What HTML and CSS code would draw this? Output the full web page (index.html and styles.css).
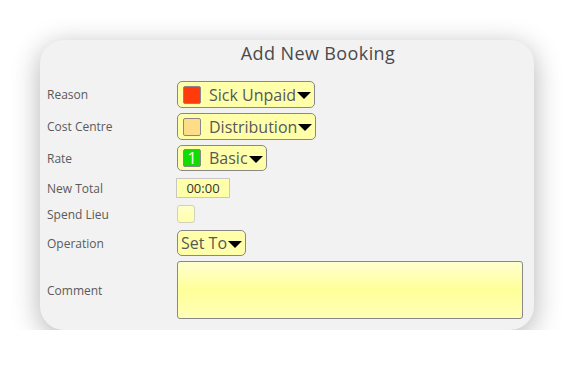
FILE: index.html
```html
<!DOCTYPE html>
<html lang="en">
<head>
    <meta charset="UTF-8">
    <title>Add New Booking</title>
    <link rel="stylesheet" href="styles.css">
</head>
<body>

<div class="dialog">
    <h1>Add New Booking</h1>

    <div class="form">
        <div class="row gap5">
            <label>Reason</label>
            <div class="select">
                <span class="swatch red"></span>
                <span class="text">Sick Unpaid</span>
                <span class="arrow"></span>
            </div>
        </div>

        <div class="row gap5">
            <label>Cost Centre</label>
            <div class="select">
                <span class="swatch tan"></span>
                <span class="text">Distribution</span>
                <span class="arrow"></span>
            </div>
        </div>

        <div class="row gap7">
            <label>Rate</label>
            <div class="select short">
                <span class="swatch green">1</span>
                <span class="text">Basic</span>
                <span class="arrow"></span>
            </div>
        </div>

        <div class="row gap7">
            <label>New Total</label>
            <div class="time">00:00</div>
        </div>

        <div class="row gap7">
            <label>Spend Lieu</label>
            <div class="check"></div>
        </div>

        <div class="row gap5">
            <label>Operation</label>
            <div class="select short op">
                <span class="text">Set To</span>
                <span class="arrow"></span>
            </div>
        </div>

        <div class="row">
            <label>Comment</label>
            <div class="comment"></div>
        </div>
    </div>
</div>

</body>
</html>
```

FILE: styles.css
```css
body {
    font-family: 'Open Sans', 'Liberation Sans', sans-serif;
    background: white;
    margin: 0;
    padding: 40px 0 0 40px;
}

.dialog {
    background-color: #f2f2f2;
    width: 494px;
    height: 290px;
    box-sizing: border-box;
    border-radius: 24px;
    box-shadow: 0 6px 28px rgba(0, 0, 0, 0.3);
    padding: 0 11px 0 7px;
}

h1 {
    margin: 0;
    padding: 1px 0 0 66px;
    height: 41px;
    box-sizing: border-box;
    text-align: center;
    font-size: 18px;
    font-weight: normal;
    line-height: 24px;
    color: #4a4a4a;
    letter-spacing: 0.4px;
}

.row {
    display: flex;
    align-items: center;
}

.gap5 {
    margin-bottom: 5px;
}

.gap7 {
    margin-bottom: 7px;
}

.row label {
    width: 130px;
    flex: none;
    font-size: 12px;
    color: #5a5a5a;
}

.select {
    height: 27px;
    box-sizing: border-box;
    display: flex;
    align-items: center;
    padding: 0 3px 0 5px;
    background-color: #ffffaa;
    border: 1px solid #888;
    border-radius: 5px;
}

.select.short {
    height: 26px;
}

.select.op {
    padding-left: 3px;
}

.swatch {
    width: 16px;
    height: 16px;
    border: 1px solid #888;
    border-radius: 2px;
    margin-right: 8px;
    display: flex;
    align-items: center;
    justify-content: center;
    font-size: 16px;
    color: white;
}

.red {
    background-color: #ff3a0c;
}

.tan {
    background-color: #ffdd88;
}

.green {
    background-color: #11dd00;
}

.text {
    font-size: 16px;
    color: #585858;
}

.arrow {
    width: 0;
    height: 0;
    margin: 2px 0 0 1px;
    border-left: 7px solid transparent;
    border-right: 7px solid transparent;
    border-top: 7px solid #000;
}

.time {
    margin-left: -1px;
    width: 54px;
    height: 20px;
    box-sizing: border-box;
    background-color: #ffffaa;
    border: 1px solid #c8c8c8;
    font-size: 13px;
    line-height: 18px;
    text-align: center;
    color: #333;
}

.check {
    width: 18px;
    height: 18px;
    box-sizing: border-box;
    border: 1px solid #d0d0c0;
    border-radius: 3px;
    background: linear-gradient(#ffffcc, #ffffa8);
}

.comment {
    width: 346px;
    height: 58px;
    box-sizing: border-box;
    border: 1px solid #888;
    border-radius: 3px;
    background: linear-gradient(#ffffd0, #ffff99 50%, #ffffb8);
}
```
